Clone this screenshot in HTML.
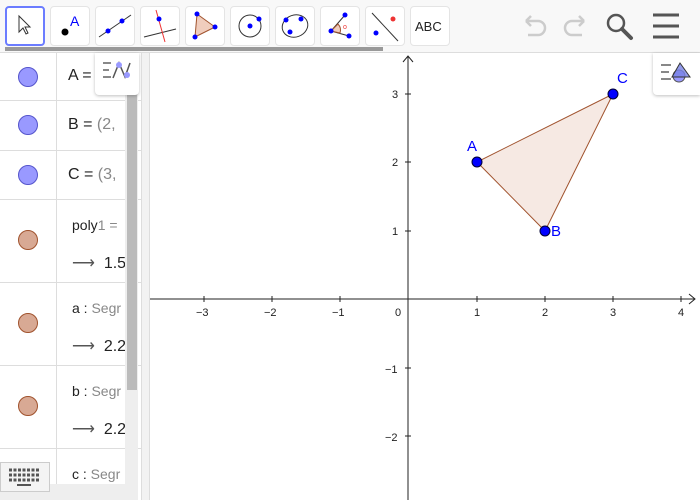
<!DOCTYPE html>
<html><head><style>
body{margin:0;width:700px;height:500px;overflow:hidden;background:#fff;font-family:"Liberation Sans",sans-serif;position:relative}
.tb{position:absolute;left:0;top:0;width:700px;height:52px;background:#f8f8f8;border-bottom:1px solid #ddd}
.btn{position:absolute;top:6px;width:38px;height:38px;background:#fff;border:1px solid #e4e4e4;border-radius:4px}
.row{position:absolute;left:0;width:148px;border-bottom:1px solid #ddd}
.dot{position:absolute;left:18px;width:18px;height:18px;border-radius:50%}
.t{position:absolute;left:68px;font-size:16px;color:#222}
.s{font-size:14px}
</style></head><body>
<div class="tb"></div>
<div class="btn" style="left:5px;border:2px solid #6b7cff;width:36px;height:36px"></div>
<div class="btn" style="left:50px"></div><div class="btn" style="left:95px"></div><div class="btn" style="left:140px"></div><div class="btn" style="left:185px"></div><div class="btn" style="left:230px"></div><div class="btn" style="left:275px"></div><div class="btn" style="left:320px"></div><div class="btn" style="left:365px"></div><div class="btn" style="left:410px"></div>
<div style="position:absolute;left:5px;top:47px;width:378px;height:4px;background:#999"></div>
<svg width="700" height="52" style="position:absolute;left:0;top:0">
<path d="M19 16 L19 32 L23 28 L26 34 L28 33 L25 27 L30 27 Z" fill="#fff" stroke="#333" stroke-width="1"/>
<circle cx="65" cy="32" r="3.5" fill="#000"/><text x="70" y="26" font-size="14" fill="#00f">A</text>
<line x1="99" y1="37" x2="131" y2="15" stroke="#333"/><circle cx="108" cy="31" r="2.5" fill="#00f"/><circle cx="122" cy="21" r="2.5" fill="#00f"/>
<line x1="144" y1="37" x2="176" y2="29" stroke="#333"/><line x1="156" y1="10" x2="165" y2="42" stroke="#e33"/><circle cx="159" cy="19" r="2.5" fill="#00f"/>
<path d="M197 14 L215 27 L195 37 Z" fill="#f0cdbd" stroke="#a0522d"/><circle cx="197" cy="14" r="2.5" fill="#00f"/><circle cx="215" cy="27" r="2.5" fill="#00f"/><circle cx="195" cy="37" r="2.5" fill="#00f"/>
<circle cx="250" cy="26" r="11" fill="none" stroke="#333"/><circle cx="250" cy="26" r="2.5" fill="#00f"/><circle cx="259" cy="19" r="2.5" fill="#00f"/>
<ellipse cx="295" cy="26" rx="13" ry="11" fill="none" stroke="#333" transform="rotate(-20 295 26)"/><circle cx="286" cy="20" r="2.5" fill="#00f"/><circle cx="301" cy="19" r="2.5" fill="#00f"/><circle cx="290" cy="32" r="2.5" fill="#00f"/>
<path d="M331 31 L345 15 M331 31 L349 36" stroke="#333"/><path d="M331 31 L338 24 A9 9 0 0 1 340 33 Z" fill="#f0cdbd" stroke="#a0522d"/><circle cx="331" cy="31" r="2.5" fill="#00f"/><circle cx="345" cy="15" r="2.5" fill="#00f"/><circle cx="349" cy="36" r="2.5" fill="#00f"/><text x="343" y="29" font-size="7" fill="#e33">o</text>
<line x1="372" y1="13" x2="398" y2="41" stroke="#333"/><circle cx="393" cy="19" r="2.5" fill="#e33"/><circle cx="376" cy="33" r="2.5" fill="#00f"/>
<text x="415" y="31" font-size="13" fill="#222">ABC</text>
<path d="M526 21 h12 a7 7 0 0 1 0 14 h-10 M526 21 l5 -5 M526 21 l5 5" fill="none" stroke="#ccc" stroke-width="2.5"/>
<path d="M584 21 h-12 a7 7 0 0 0 0 14 h10 M584 21 l-5 -5 M584 21 l-5 5" fill="none" stroke="#ccc" stroke-width="2.5"/>
<circle cx="616" cy="23" r="8" fill="none" stroke="#555" stroke-width="2.5"/><line x1="622" y1="29" x2="631" y2="38" stroke="#555" stroke-width="4" stroke-linecap="round"/>
<path d="M653 15 h26 M653 26 h26 M653 37 h26" stroke="#555" stroke-width="3"/>
</svg>
<div style="position:absolute;left:56px;top:53px;width:1px;height:447px;background:#ddd"></div>
<div class="row" style="top:53px;height:47px"><div class="dot" style="top:14px;background:#99f;border:1px solid #55c"></div><div class="t" style="top:14px">A = </div></div>
<div class="row" style="top:101px;height:49px"><div class="dot" style="top:14px;background:#99f;border:1px solid #55c"></div><div class="t" style="top:15px">B = <span style="color:#888">(2,</span></div></div>
<div class="row" style="top:151px;height:48px"><div class="dot" style="top:14px;background:#99f;border:1px solid #55c"></div><div class="t" style="top:15px">C = <span style="color:#888">(3,</span></div></div>
<div class="row" style="top:200px;height:82px"><div class="dot" style="top:30px;background:#d8a994;border:1px solid #a0522d"></div><div class="t s" style="left:72px;top:17px">poly<span style="color:#888">1 =</span></div><div class="t" style="left:72px;top:53px"><span style="color:#555">⟶</span>&nbsp; 1.5</div></div>
<div class="row" style="top:283px;height:82px"><div class="dot" style="top:30px;background:#d8a994;border:1px solid #a0522d"></div><div class="t s" style="left:72px;top:17px">a : <span style="color:#888">Segr</span></div><div class="t" style="left:72px;top:53px"><span style="color:#555">⟶</span>&nbsp; 2.24</div></div>
<div class="row" style="top:366px;height:82px"><div class="dot" style="top:30px;background:#d8a994;border:1px solid #a0522d"></div><div class="t s" style="left:72px;top:17px">b : <span style="color:#888">Segr</span></div><div class="t" style="left:72px;top:53px"><span style="color:#555">⟶</span>&nbsp; 2.24</div></div>
<div class="row" style="top:449px;height:51px;border:none"><div class="t s" style="left:72px;top:17px">c : <span style="color:#888">Segr</span></div></div>
<div style="position:absolute;left:125px;top:53px;width:13px;height:447px;background:#eee"></div>
<div style="position:absolute;left:127px;top:90px;width:10px;height:300px;background:#bbb"></div>
<div style="position:absolute;left:0;top:484px;width:125px;height:16px;background:#eee"></div>
<div style="position:absolute;left:0;top:462px;width:48px;height:28px;background:#f4f4f4;border:1px solid #ccc"></div>
<svg width="48" height="28" style="position:absolute;left:0;top:462px"><path d="M9 8h30M9 13h30M9 18h30" stroke="#555" stroke-width="3" stroke-dasharray="3 1.5"/><path d="M17 23h14" stroke="#555" stroke-width="2"/></svg>
<div style="position:absolute;left:95px;top:53px;width:44px;height:42px;background:#fff;box-shadow:0 1px 3px rgba(0,0,0,.25);border-radius:0 0 4px 4px"></div>
<svg width="44" height="42" style="position:absolute;left:95px;top:53px"><path d="M8 10h8M8 17h6M8 24h8" stroke="#888" stroke-width="2"/><path d="M18 25 L24 10 L30 24 L35 10" fill="none" stroke="#555" stroke-width="1.5"/><circle cx="24" cy="12" r="3" fill="#99f"/><circle cx="32" cy="22" r="3" fill="#99f"/></svg>
<div style="position:absolute;left:141px;top:53px;width:7px;height:447px;background:#f2f2f2;border-left:1px solid #ddd;border-right:1px solid #ddd"></div>
<svg width="700" height="500" style="position:absolute;left:0;top:0">
<g font-size="11" fill="#222" font-family="Liberation Sans">
<line x1="150" y1="299" x2="695" y2="299" stroke="#222"/><path d="M689 294 L695 299 L689 304" fill="none" stroke="#222"/>
<line x1="408" y1="56" x2="408" y2="500" stroke="#222"/><path d="M403 62 L408 56 L413 62" fill="none" stroke="#222"/>
<path d="M204 296v6M272 296v6M340 296v6M477 296v6M545 296v6M613 296v6M681 296v6M405 94h6M405 162h6M405 231h6M405 368h6M405 436h6" stroke="#222"/>
<text x="196" y="316">−3</text><text x="264" y="316">−2</text><text x="332" y="316">−1</text><text x="395" y="316">0</text><text x="474" y="316">1</text><text x="542" y="316">2</text><text x="610" y="316">3</text><text x="678" y="316">4</text>
<text x="392" y="98">3</text><text x="392" y="166">2</text><text x="392" y="235">1</text><text x="385" y="373">−1</text><text x="385" y="441">−2</text>
</g>
<path d="M477 162 L545 231 L613 94 Z" fill="rgba(205,133,100,0.18)" stroke="#a0522d" stroke-width="1"/>
<circle cx="477" cy="162" r="5" fill="#00f" stroke="#003"/><circle cx="545" cy="231" r="5" fill="#00f" stroke="#003"/><circle cx="613" cy="94" r="5" fill="#00f" stroke="#003"/>
<g fill="#00f" font-size="15" font-family="Liberation Sans"><text x="467" y="151">A</text><text x="551" y="236">B</text><text x="617" y="83">C</text></g>
</svg>
<div style="position:absolute;left:653px;top:53px;width:47px;height:42px;background:#fff;box-shadow:0 1px 3px rgba(0,0,0,.25);border-radius:0 0 0 4px"></div>
<svg width="47" height="42" style="position:absolute;left:653px;top:53px"><path d="M8 12h10M8 19h8M8 26h10" stroke="#888" stroke-width="2"/><circle cx="26" cy="23" r="6" fill="#99f" stroke="#555"/><path d="M27 10 L37 24 L19 24 Z" fill="rgba(120,130,230,.8)" stroke="#333"/></svg>
</body></html>
